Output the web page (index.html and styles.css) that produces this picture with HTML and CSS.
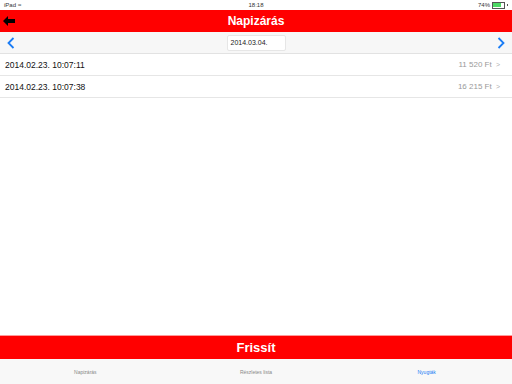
FILE: index.html
```html
<html lang="hu">
<head>
    <meta charset="UTF-8">
    <title>Napizárás</title>
    <link rel="stylesheet" href="styles.css">
</head>
<body>
	<div class="statusbar">
		<div class="sb-left">iPad <span class="wifi">&#8776;</span></div>
		<div class="sb-center">18:18</div>
		<div class="sb-right">74% <span class="battery"><span class="battery-fill"></span></span><span class="battery-tip"></span></div>
	</div>

	<div class="header">
		<div class="back">
			<svg width="12" height="10" viewBox="0 0 12 10"><path d="M0 5 L5 0 L5 3 L12 3 L12 7 L5 7 L5 10 Z" fill="#000"/></svg>
		</div>
		<h1 class="title">Napizárás</h1>
	</div>

	<div class="toolbar">
		<svg class="nav-arrow" width="8" height="12" viewBox="0 0 8 12"><path d="M6.5 1 L1.5 6 L6.5 11" stroke="#1a7cf5" stroke-width="1.8" fill="none"/></svg>
		<div class="date-box">2014.03.04.</div>
		<svg class="nav-arrow" width="8" height="12" viewBox="0 0 8 12"><path d="M1.5 1 L6.5 6 L1.5 11" stroke="#1a7cf5" stroke-width="1.8" fill="none"/></svg>
	</div>

	<div class="list">
		<div class="row">
			<span class="row-date">2014.02.23. 10:07:11</span>
			<span class="row-amount">11 520 Ft <span class="chev">&gt;</span></span>
		</div>
		<div class="row">
			<span class="row-date">2014.02.23. 10:07:38</span>
			<span class="row-amount">16 215 Ft <span class="chev">&gt;</span></span>
		</div>
	</div>

	<button class="refresh">Frissít</button>

	<div class="tabbar">
		<div class="tab">Napizárás</div>
		<div class="tab">Részletes lista</div>
		<div class="tab active">Nyugták</div>
	</div>
</body>
</html>
```

FILE: styles.css
```css
body {
	margin: 0;
	padding: 0;
	width: 512px;
	height: 384px;
	display: flex;
	flex-direction: column;
	font-family: "Liberation Sans", Arial, sans-serif;
	background-color: white;
	overflow: hidden;
}

.statusbar {
	height: 10px;
	display: flex;
	align-items: center;
	justify-content: space-between;
	padding: 0 4px;
	font-size: 6px;
	color: #333;
}

.sb-left, .sb-right {
	width: 80px;
	display: flex;
	align-items: center;
	gap: 2px;
}

.sb-right {
	justify-content: flex-end;
}

.battery {
	width: 10px;
	height: 4px;
	border: 0.5px solid #555;
	padding: 0.5px;
	display: inline-block;
}

.battery-fill {
	display: block;
	width: 74%;
	height: 100%;
	background-color: #4cd964;
}

.battery-tip {
	width: 1px;
	height: 2px;
	background-color: #555;
}

.header {
	height: 22px;
	background-color: #ff0000;
	display: flex;
	align-items: center;
	justify-content: center;
	position: relative;
}

.back {
	position: absolute;
	left: 3px;
	top: 6px;
}

.title {
	margin: 0;
	color: white;
	font-size: 12px;
	font-weight: bold;
}

.toolbar {
	height: 21px;
	background-color: #f7f7f7;
	border-bottom: 1px solid #e2e2e2;
	display: flex;
	align-items: center;
	justify-content: space-between;
	padding: 0 7px;
}

.date-box {
	width: 54px;
	height: 14px;
	background-color: white;
	border: 1px solid #e6e6e6;
	border-radius: 2px;
	font-size: 7px;
	color: #222;
	display: flex;
	align-items: center;
	padding-left: 3px;
}

.list {
	flex: 1;
}

.row {
	height: 21px;
	border-bottom: 1px solid #e6e6e6;
	display: flex;
	align-items: center;
	justify-content: space-between;
	padding: 0 12px 0 5px;
	font-size: 8px;
}

.row-date {
	color: #111;
	font-size: 8.5px;
}

.row-amount {
	color: #9a9a9a;
}

.chev {
	margin-left: 2px;
	font-size: 7px;
	color: #b0b0b0;
}

.refresh {
	height: 24px;
	background-color: #ff0000;
	border: none;
	border-top: 1px solid #ff9a9a;
	color: white;
	font-family: "Liberation Sans", Arial, sans-serif;
	font-size: 13px;
	font-weight: bold;
	padding: 0;
	width: 100%;
}

.tabbar {
	height: 25px;
	background-color: #f8f8f8;
	display: flex;
	align-items: center;
}

.tab {
	flex: 1;
	text-align: center;
	font-size: 5px;
	color: #888;
}

.tab.active {
	color: #1a7cf5;
}
```
